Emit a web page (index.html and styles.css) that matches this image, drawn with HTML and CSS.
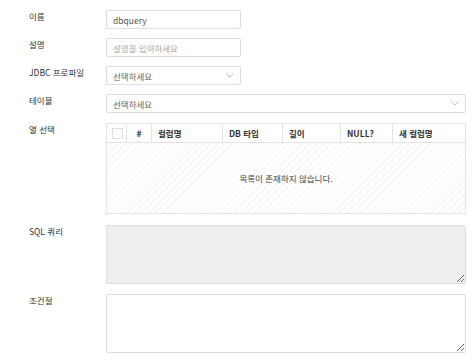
FILE: index.html
```html
<!DOCTYPE html>
<html lang="ko">
<head>
    <meta charset="UTF-8">
    <meta name="viewport" content="width=device-width, initial-scale=1.0">
    <title>쿼리 등록</title>
    <link rel="stylesheet" href="styles.css">
</head>
<body>
    <div class="form">
        <div class="row">
            <label class="label">이름</label>
            <div class="field"><input class="input short" type="text" value="dbquery"></div>
        </div>
        <div class="row">
            <label class="label">설명</label>
            <div class="field"><input class="input short" type="text" placeholder="설명을 입력하세요"></div>
        </div>
        <div class="row">
            <label class="label">JDBC 프로파일</label>
            <div class="field">
                <div class="select short">
                    <span>선택하세요</span>
                    <svg class="chevron" width="8" height="5" viewBox="0 0 8 5"><path d="M0.5 0.5 L4 4 L7.5 0.5" fill="none" stroke="#c2c2c2" stroke-width="1"/></svg>
                </div>
            </div>
        </div>
        <div class="row gap-mid">
            <label class="label">테이블</label>
            <div class="field">
                <div class="select">
                    <span>선택하세요</span>
                    <svg class="chevron" width="8" height="5" viewBox="0 0 8 5"><path d="M0.5 0.5 L4 4 L7.5 0.5" fill="none" stroke="#c2c2c2" stroke-width="1"/></svg>
                </div>
            </div>
        </div>
        <div class="row gap-big">
            <label class="label">열 선택</label>
            <div class="field">
                <table class="columns">
                    <thead>
                        <tr>
                            <th class="col-check"><span class="checkbox"></span></th>
                            <th class="col-num">#</th>
                            <th class="col-name">컬럼명</th>
                            <th class="col-type">DB 타입</th>
                            <th class="col-len">길이</th>
                            <th class="col-null">NULL?</th>
                            <th>새 컬럼명</th>
                        </tr>
                    </thead>
                    <tbody>
                        <tr>
                            <td colspan="7" class="empty">목록이 존재하지 않습니다.</td>
                        </tr>
                    </tbody>
                </table>
            </div>
        </div>
        <div class="row gap-mid">
            <label class="label">SQL 쿼리</label>
            <div class="field"><textarea class="textarea readonly" readonly></textarea></div>
        </div>
        <div class="row">
            <label class="label">조건절</label>
            <div class="field"><textarea class="textarea"></textarea></div>
        </div>
    </div>
</body>
</html>
```

FILE: styles.css
```css
body {
    margin: 0;
    padding: 0;
    background-color: #fff;
    color: #333;
    font-family: "Noto Sans CJK KR", "Noto Sans", sans-serif;
    font-size: 8.5px;
}
.form {
    padding: 10px 8px 0 29px;
}
.row {
    display: flex;
    margin-bottom: 9px;
}
.row.gap-mid {
    margin-bottom: 10px;
}
.row.gap-big {
    margin-bottom: 11px;
}
.label {
    width: 77px;
    flex-shrink: 0;
    line-height: 12px;
    color: #333;
}
.field {
    flex: 1;
}
.input,
.select {
    box-sizing: border-box;
    height: 19px;
    border: 1px solid #ddd;
    border-radius: 2px;
    padding: 0 6px;
    font-family: inherit;
    font-size: 8.5px;
    color: #555;
    background: #fff;
    outline: none;
}
.input::placeholder {
    color: #aaa;
}
.short {
    width: 135px;
}
.select {
    display: flex;
    align-items: center;
    justify-content: space-between;
    color: #666;
}
.columns {
    width: 100%;
    table-layout: fixed;
    border-collapse: collapse;
    border: 1px solid #e3e3e3;
}
.columns th {
    box-sizing: border-box;
    height: 19px;
    padding: 0 6px;
    border: 1px solid #e3e3e3;
    text-align: left;
    font-weight: bold;
    color: #333;
    background: #fff;
}
.columns th.col-check {
    width: 20px;
    padding: 0 4px 0 5px;
}
.columns th.col-num {
    width: 25px;
    text-align: center;
}
.col-name { width: 71px; }
.col-type { width: 60px; }
.col-len { width: 58px; }
.col-null { width: 52px; }
.checkbox {
    display: block;
    box-sizing: border-box;
    width: 11px;
    height: 11px;
    border: 1px solid #ddd;
    background: #fff;
}
.empty {
    height: 70px;
    padding: 0;
    text-align: center;
    color: #444;
    background: repeating-linear-gradient(-45deg, #fff 0, #fff 4px, #f3f3f3 4px, #f3f3f3 5px);
}
.textarea {
    display: block;
    box-sizing: border-box;
    width: 100%;
    height: 59px;
    border: 1px solid #ddd;
    border-radius: 2px;
    font-family: inherit;
    font-size: 8.5px;
    resize: vertical;
    outline: none;
    background: #fff;
}
.textarea.readonly {
    background: #eee;
}
```
